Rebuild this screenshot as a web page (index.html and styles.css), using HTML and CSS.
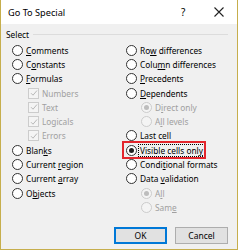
FILE: index.html
```html
<!DOCTYPE html>
<html lang="en">
<head>
    <meta charset="UTF-8">
    <title>Go To Special</title>
    <link rel="stylesheet" href="styles.css">
</head>
<body>
    <div class="window">
        <div class="titlebar">
            <span class="title">Go To Special</span>
            <span class="help">?</span>
            <span class="close">
                <svg width="10" height="10" viewBox="0 0 10 10"><path d="M0.5 0.5L9.5 9.5M9.5 0.5L0.5 9.5" stroke="#222" stroke-width="1.1"/></svg>
            </span>
        </div>
        <div class="content">
            <div class="group-head">
                <span>Select</span>
                <div class="rule"></div>
            </div>
            <div class="cols">
                <div class="col">
                    <div class="opt"><i class="radio"></i><span><u>C</u>omments</span></div>
                    <div class="opt"><i class="radio"></i><span>C<u>o</u>nstants</span></div>
                    <div class="opt"><i class="radio"></i><span><u>F</u>ormulas</span></div>
                    <div class="opt sub off"><i class="check"><svg width="8" height="8" viewBox="0 0 8 8"><path d="M1 4.2L3 6.2L7 1.5" fill="none" stroke="#b8b8b8" stroke-width="1"/></svg></i><span>Numbers</span></div>
                    <div class="opt sub off"><i class="check"><svg width="8" height="8" viewBox="0 0 8 8"><path d="M1 4.2L3 6.2L7 1.5" fill="none" stroke="#b8b8b8" stroke-width="1"/></svg></i><span>Text</span></div>
                    <div class="opt sub off"><i class="check"><svg width="8" height="8" viewBox="0 0 8 8"><path d="M1 4.2L3 6.2L7 1.5" fill="none" stroke="#b8b8b8" stroke-width="1"/></svg></i><span>Logicals</span></div>
                    <div class="opt sub off"><i class="check"><svg width="8" height="8" viewBox="0 0 8 8"><path d="M1 4.2L3 6.2L7 1.5" fill="none" stroke="#b8b8b8" stroke-width="1"/></svg></i><span>Errors</span></div>
                    <div class="opt"><i class="radio"></i><span>Blan<u>k</u>s</span></div>
                    <div class="opt"><i class="radio"></i><span>Current <u>r</u>egion</span></div>
                    <div class="opt"><i class="radio"></i><span>Current <u>a</u>rray</span></div>
                    <div class="opt"><i class="radio"></i><span>O<u>b</u>jects</span></div>
                </div>
                <div class="col">
                    <div class="opt"><i class="radio"></i><span>Ro<u>w</u> differences</span></div>
                    <div class="opt"><i class="radio"></i><span>Colu<u>m</u>n differences</span></div>
                    <div class="opt"><i class="radio"></i><span><u>P</u>recedents</span></div>
                    <div class="opt"><i class="radio"></i><span><u>D</u>ependents</span></div>
                    <div class="opt sub off"><i class="radio on"></i><span>D<u>i</u>rect only</span></div>
                    <div class="opt sub off"><i class="radio"></i><span>A<u>l</u>l levels</span></div>
                    <div class="opt"><i class="radio"></i><span>Last cell</span></div>
                    <div class="opt picked"><i class="radio on"></i><span class="focus">Visible cells onl<u>y</u></span><div class="mark"></div></div>
                    <div class="opt"><i class="radio"></i><span>Condi<u>t</u>ional formats</span></div>
                    <div class="opt"><i class="radio"></i><span>Data <u>v</u>alidation</span></div>
                    <div class="opt sub off"><i class="radio on"></i><span>A<u>l</u>l</span></div>
                    <div class="opt sub off"><i class="radio"></i><span>Sam<u>e</u></span></div>
                </div>
            </div>
            <div class="buttons">
                <button class="default">OK</button>
                <button>Cancel</button>
            </div>
        </div>
    </div>
</body>
</html>
```

FILE: styles.css
```css
html, body {
    margin: 0;
    padding: 0;
}
body {
    font-family: "Noto Sans", "Open Sans", sans-serif;
    font-size: 8.3px;
    color: #000;
    background: #fff;
}
.window {
    width: 238px;
    height: 250px;
    box-sizing: border-box;
    border: 1px solid #c6ae4c;
    border-top: none;
    background: #f0f0f0;
    display: flex;
    flex-direction: column;
}
.titlebar {
    height: 24px;
    background: #fff;
    display: flex;
    align-items: center;
    padding-left: 7px;
}
.title {
    font-size: 9.2px;
    flex: 1;
}
.help {
    font-size: 10px;
    width: 12px;
    margin-right: 21px;
}
.close {
    width: 10px;
    height: 10px;
    margin-right: 13px;
    display: flex;
}
.content {
    flex: 1;
    padding: 4px 9px 0 5px;
}
.group-head {
    display: flex;
    align-items: center;
    height: 12px;
}
.group-head span {
    margin-right: 4px;
}
.rule {
    flex: 1;
    height: 1px;
    background: #dcdcdc;
}
.cols {
    display: grid;
    grid-template-columns: 114px 1fr;
    margin-top: 3px;
    padding-left: 6px;
}
.opt {
    height: 14.3px;
    display: flex;
    align-items: center;
    white-space: nowrap;
    position: relative;
}
.opt.sub {
    padding-left: 16px;
}
.col + .col .opt.sub {
    padding-left: 15px;
}
.opt.off {
    color: #a0a0a0;
}
.opt u {
    text-decoration-thickness: 1px;
    text-underline-offset: 1px;
}
.radio {
    width: 9px;
    height: 9px;
    border: 1px solid #333;
    border-radius: 50%;
    background: #fff;
    margin-right: 3px;
    flex: none;
    display: flex;
    align-items: center;
    justify-content: center;
}
.radio.on::after {
    content: "";
    width: 5px;
    height: 5px;
    border-radius: 50%;
    background: #222;
}
.off .radio {
    border-color: #cccccc;
    background: #f4f4f4;
}
.off .radio.on::after {
    background: #bdbdbd;
}
.check {
    width: 9px;
    height: 9px;
    border: 1px solid #cccccc;
    background: #f4f4f4;
    margin-right: 3px;
    flex: none;
    display: flex;
    align-items: center;
    justify-content: center;
}
.focus {
    outline: 1px dotted #000;
    outline-offset: 0;
    padding: 0 1px;
    margin-left: -1px;
}
.mark {
    position: absolute;
    left: -4px;
    top: -2px;
    width: 80px;
    height: 14px;
    border: 2px solid #e3262d;
}
.buttons {
    display: flex;
    justify-content: flex-end;
    gap: 8px;
    margin-top: 12px;
}
.buttons button {
    width: 53px;
    height: 17px;
    box-sizing: border-box;
    font-family: inherit;
    font-size: 8.5px;
    background: #e1e1e1;
    border: 1px solid #adadad;
    padding: 0;
    color: #000;
}
.buttons button.default {
    border: 1px solid #0078d7;
    box-shadow: inset 0 0 0 1px #0078d7;
}
```
